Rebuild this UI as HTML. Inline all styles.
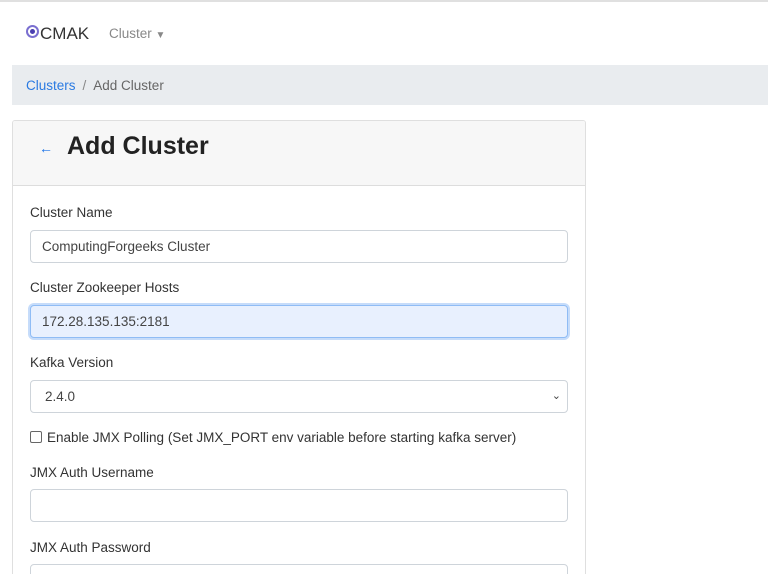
<!DOCTYPE html>
<html><head><style>
html,body{margin:0;width:768px;height:574px;overflow:hidden}
body{background:#fff;font-family:"Liberation Sans",sans-serif;color:#212529;position:relative}
.a{position:absolute}
.top{left:0;top:0;width:768px;height:2px;background:#e0e0e0}
.brand{left:26px;top:24px;font-size:17px;color:#333}
.dot{display:inline-block;width:9px;height:9px;border:2px solid #7a6fd0;border-radius:50%;vertical-align:1px;position:relative;margin-right:1px;box-sizing:content-box}
.dot:after{content:"";position:absolute;left:2px;top:2px;width:5px;height:5px;border-radius:50%;background:#4a3fb0}
.nav{left:109px;top:26px;font-size:13.5px;color:#888}
.bc{left:12px;top:65px;width:756px;height:40px;background:#e9ecef;font-size:13.5px;line-height:41px}
.card{left:12px;top:120px;width:574px;height:470px;border:1px solid #dfdfdf;border-radius:3px;box-sizing:border-box;overflow:hidden}
.ch{height:64px;background:#f7f7f7;border-bottom:1px solid #ddd}
.lbl{left:30px;font-size:13.5px;color:#333}
.in{left:30px;width:538px;height:33px;border:1px solid #ced4da;border-radius:4px;box-sizing:border-box;font-size:13.5px;line-height:31px;padding-left:11px;color:#444}
</style></head><body>
<div class="a top"></div>
<div class="a brand"><span class="dot"></span>CMAK</div>
<div class="a nav">Cluster <span style="font-size:10px">▼</span></div>
<div class="a bc"><span style="margin-left:14px;color:#2a7ae2">Clusters</span><span style="color:#888;margin:0 7px">/</span><span style="color:#666">Add Cluster</span></div>
<div class="a card"><div class="ch"></div></div>
<div class="a" style="left:39px;top:140px;color:#1a73e8;font-size:14px;font-weight:bold">&#x2190;</div>
<div class="a" style="left:67px;top:132px;font-size:25px;color:#222;font-weight:bold">Add Cluster</div>
<div class="a lbl" style="top:205px">Cluster Name</div>
<div class="a in" style="top:230px">ComputingForgeeks Cluster</div>
<div class="a lbl" style="top:280px">Cluster Zookeeper Hosts</div>
<div class="a in" style="top:305px;background:#e8f0fe;border:1px solid #8fbcf5;box-shadow:0 0 0 2px #c6dcfa">172.28.135.135:2181</div>
<div class="a lbl" style="top:355px">Kafka Version</div>
<div class="a in" style="top:380px;padding-left:14px">2.4.0<span style="position:absolute;right:6px;top:0;font-size:11px">&#x2304;</span></div>
<div class="a" style="left:30px;top:431px;width:10px;height:10px;border:1px solid #666;border-radius:2px"></div>
<div class="a lbl" style="left:47px;top:430px">Enable JMX Polling (Set JMX_PORT env variable before starting kafka server)</div>
<div class="a lbl" style="top:465px">JMX Auth Username</div>
<div class="a in" style="top:489px"></div>
<div class="a lbl" style="top:540px">JMX Auth Password</div>
<div class="a in" style="top:564px"></div>
</body></html>
